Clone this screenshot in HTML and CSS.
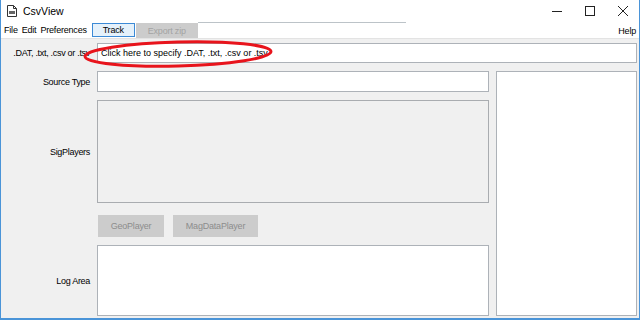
FILE: index.html
```html
<!DOCTYPE html>
<html lang="en">
<head>
    <meta charset="UTF-8">
    <title>CsvView</title>
    <link rel="stylesheet" href="styles.css">
</head>
<body>
    <div class="window">
        <div class="titlebar">
            <svg class="app-icon" width="12" height="12" viewBox="0 0 12 12">
                <path d="M1.5 0.5h6l3 3v8h-9z" fill="#fff" stroke="#333"/>
                <path d="M7.5 0.5v3h3" fill="none" stroke="#333"/>
                <rect x="3" y="6" width="6" height="3" fill="#666"/>
            </svg>
            <span class="title">CsvView</span>
            <div class="controls">
                <svg width="12" height="12" viewBox="0 0 12 12"><path d="M1 6.5h10" stroke="#222"/></svg>
                <svg width="12" height="12" viewBox="0 0 12 12"><rect x="1.5" y="1.5" width="9" height="9" fill="none" stroke="#222"/></svg>
                <svg width="12" height="12" viewBox="0 0 12 12"><path d="M1 1l10 10M11 1L1 11" stroke="#222"/></svg>
            </div>
        </div>
        <div class="menubar">
            <span class="menu">File</span>
            <span class="menu">Edit</span>
            <span class="menu">Preferences</span>
            <span class="tool active">Track</span>
            <span class="tool disabled">Export zip</span>
            <span class="menu-field"></span>
            <span class="menu help">Help</span>
        </div>
        <div class="content">
            <label class="label">.DAT, .txt, .csv or .tsv</label>
            <div class="box file-box">Click here to specify .DAT, .txt, .csv or .tsv</div>

            <label class="label">Source Type</label>
            <div class="box"></div>
            <div class="box side-panel"></div>

            <label class="label">SigPlayers</label>
            <div class="group"></div>

            <div class="players">
                <span class="player-btn geo">GeoPlayer</span>
                <span class="player-btn mag">MagDataPlayer</span>
            </div>

            <label class="label">Log Area</label>
            <div class="box"></div>

            <svg class="mark" width="200" height="32" viewBox="0 0 200 32">
                <ellipse cx="96" cy="15" rx="93" ry="12" fill="none" stroke="#e8141c" stroke-width="3" transform="rotate(-1.5 96 15)"/>
            </svg>
        </div>
    </div>
</body>
</html>
```

FILE: styles.css
```css
* { box-sizing: border-box; }
body { margin: 0; font-family: "Liberation Sans", Arial, sans-serif; font-size: 9px; color: #000; }

.window { width: 640px; height: 320px; display: flex; flex-direction: column; border: 1px solid #4a94d8; border-top: none; border-bottom-width: 2px; background: #f0f0f0; }

.titlebar { height: 22px; display: flex; align-items: center; background: #fff; padding-left: 5px; }
.app-icon { margin-right: 5px; }
.title { font-size: 10.5px; }
.controls { margin-left: auto; display: flex; gap: 21px; padding-right: 10px; }

.menubar { height: 17px; display: flex; align-items: stretch; background: #fff; border-bottom: 1px solid #e3e3e3; padding-left: 1px; letter-spacing: -0.2px; }
.menu { display: flex; align-items: center; padding: 0 2px; }
.tool { display: flex; align-items: center; justify-content: center; margin-top: 1px; }
.tool.active { width: 43px; margin-left: 3px; margin-bottom: 1px; background: #e5f1fb; border: 1px solid #3c8ad6; }
.tool.disabled { width: 62px; margin-left: 1px; background: #cccccc; color: #a3a3a3; }
.menu-field { width: 208px; border-top: 1px solid #bcc3c8; }
.help { margin-left: auto; padding-right: 3px; padding-top: 2px; }

.content { position: relative; flex: 1; display: grid; grid-template-columns: 89px 392px 141px; grid-template-rows: 20px 21px 103px 26px 71px; column-gap: 7px; row-gap: 8px; padding: 4px 2px 0 0; }
.label { display: flex; align-items: center; justify-content: flex-end; white-space: nowrap; letter-spacing: -0.3px; }
.box { background: #fff; border: 1px solid #adb2b8; }
.file-box { grid-column: 2 / 4; display: flex; align-items: center; padding-left: 3px; }
.side-panel { grid-column: 3; grid-row: 2 / 6; }
.group { border: 1px solid #a9acb0; }
.players { grid-column: 2; display: flex; align-items: flex-end; gap: 9px; padding-left: 1px; letter-spacing: -0.2px; }
.player-btn { height: 22px; display: flex; align-items: center; justify-content: center; background: #cccccc; color: #8c8c8c; }
.geo { width: 66px; }
.mag { width: 85px; }

.mark { position: absolute; left: 81px; top: 0; }
```
